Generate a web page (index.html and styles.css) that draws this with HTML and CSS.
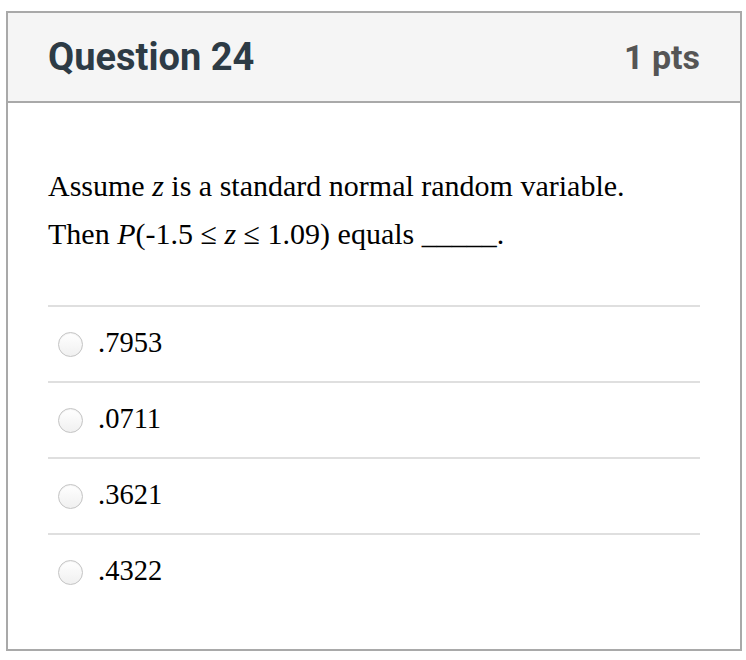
FILE: index.html
```html
<!DOCTYPE html>
<html>
<head>
<meta charset="utf-8">
<link rel="stylesheet" href="styles.css">
</head>
<body>
<div class="page">
  <div class="card">
    <div class="header">
      <h2 class="title">Question 24</h2>
      <div class="pts">1 pts</div>
    </div>
    <div class="body">
      <div class="question">
        <div>Assume <i>z</i> is a standard normal random variable.</div>
        <div>Then <i>P</i>(-1.5 ≤ <i>z</i> ≤ 1.09) equals _____.</div>
      </div>
      <div class="answers">
        <label class="answer"><span class="radio"></span><span class="label">.7953</span></label>
        <label class="answer"><span class="radio"></span><span class="label">.0711</span></label>
        <label class="answer"><span class="radio"></span><span class="label">.3621</span></label>
        <label class="answer"><span class="radio"></span><span class="label">.4322</span></label>
      </div>
    </div>
  </div>
</div>
</body>
</html>
```

FILE: styles.css
```css
html, body {
  margin: 0;
  padding: 0;
  background: #ffffff;
}
.page {
  padding: 11px 4px 9px 6px;
}
.card {
  border: 2px solid #a9a9a9;
  height: 636px;
  box-sizing: content-box;
  display: flex;
  flex-direction: column;
}
.header {
  height: 88px;
  background: #f5f5f5;
  border-bottom: 2px solid #a9a9a9;
  display: flex;
  align-items: center;
  justify-content: space-between;
  padding: 0 40px;
  font-family: Roboto, "Liberation Sans", sans-serif;
  font-weight: 700;
}
.title {
  margin: 0;
  font-size: 38px;
  font-weight: 700;
  color: #2d3b45;
}
.pts {
  font-size: 34px;
  color: #555555;
}
.body {
  padding: 59px 40px 0 40px;
  font-family: "Liberation Serif", "Times New Roman", serif;
  color: #000;
}
.question {
  font-size: 30px;
  line-height: 48px;
}
.answers {
  margin-top: 47px;
  font-size: 28.5px;
}
.answer {
  display: flex;
  align-items: center;
  height: 74px;
  box-sizing: content-box;
  border-top: 2px solid #dfdfdf;
  line-height: 32px;
}
.radio {
  width: 23px;
  height: 23px;
  border-radius: 50%;
  border: 1px solid #c4c4c4;
  background: linear-gradient(#ffffff, #f0f0f0);
  box-shadow: inset 0 1px 1px rgba(0,0,0,0.05);
  margin-left: 10px;
  margin-right: 15px;
  flex: none;
}
.label {
  display: block;
  margin-bottom: 3px;
}
```
